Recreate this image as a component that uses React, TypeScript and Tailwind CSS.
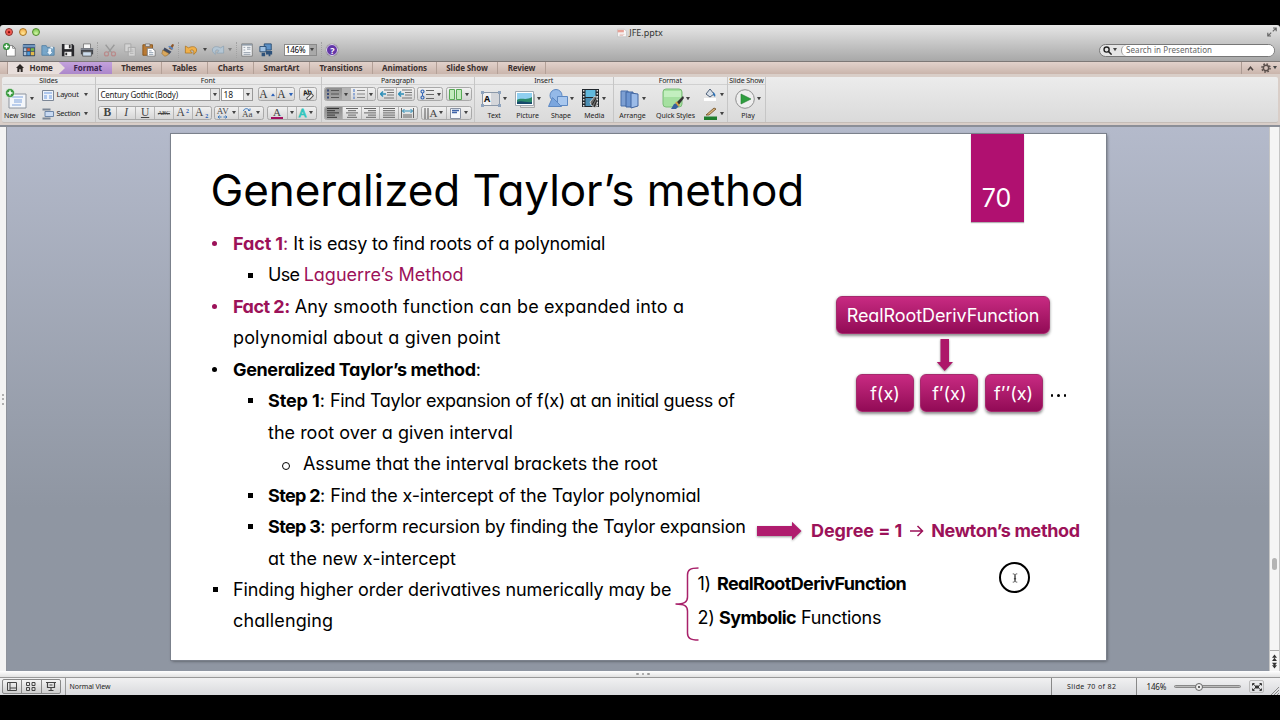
import type { ReactNode } from "react";
import clsx from "clsx";

const tabs = [
  { label: "Themes", width: "w-[50px]" },
  { label: "Tables", width: "w-[46px]" },
  { label: "Charts", width: "w-[46px]" },
  { label: "SmartArt", width: "w-[56px]" },
  { label: "Transitions", width: "w-[63px]" },
  { label: "Animations", width: "w-[64px]" },
  { label: "Slide Show", width: "w-[61px]" },
  { label: "Review", width: "w-[48px]" },
];

interface IconProps {
  size?: string;
  box?: string;
  children: ReactNode;
}

function Icon({ size = "w-[14px] h-[14px]", box = "0 0 16 16", children }: IconProps) {
  return (
    <svg viewBox={box} className={clsx("shrink-0", size)} fill="none">
      {children}
    </svg>
  );
}

function Caret({ className }: { className?: string }) {
  return (
    <svg viewBox="0 0 6 5" className={clsx("w-[4px] h-[3.4px] shrink-0", className)}>
      <path d="M0 0h6L3 5z" fill="#444" />
    </svg>
  );
}

/* ---------- Title bar and standard toolbar ---------- */

function Light({ className }: { className: string }) {
  return <span className={clsx("size-[8px] rounded-full border", className)} />;
}

function TitleRow() {
  return (
    <div className="relative flex h-[15px] items-center justify-center">
      <div className="absolute left-[5px] top-[3px] flex gap-[5.5px]">
        <Light className="border-[#8c2a24] bg-[radial-gradient(circle_at_50%_55%,#7c1010_0_18%,#ee4a42_30%,#f58a80)]" />
        <Light className="border-[#a87424] bg-[radial-gradient(circle_at_50%_80%,#ffe79a,#f2a63a)]" />
        <Light className="border-[#4f8a2c] bg-[radial-gradient(circle_at_50%_80%,#d5f7a6,#6cbf42)]" />
      </div>
      <div className="flex items-center gap-[2px] text-[9px] text-[#333]">
        <Icon size="w-[10px] h-[10px]">
          <path d="M1 2h11l3 3v9H1z" fill="#fafafa" stroke="#b9b9b9" />
          <path d="M1 3h10v4H1z" fill="#e8a196" />
          <path d="M4 10h8M4 12h6" stroke="#d9a9a1" />
        </Icon>
        JFE.pptx
      </div>
      <svg viewBox="0 0 10 10" className="absolute right-[3px] top-[2px] size-[10px]" fill="none" stroke="#666" strokeWidth="1.2">
        <path d="M6 1h3.2v3.2M9 1.2 5.8 4.4M4 9H.8V5.8M1 8.8l3.2-3.2" />
      </svg>
    </div>
  );
}

function ToolCell({ children, width = "w-[19.4px]" }: { children: ReactNode; width?: string }) {
  return <span className={clsx("flex h-full shrink-0 items-center justify-center", width)}>{children}</span>;
}

function Divider() {
  return <span className="h-[16px] w-px shrink-0 border-l border-dotted border-[#a2a2a2]" />;
}

function StandardToolbar() {
  return (
    <div className="flex h-[20px] items-center">
      <ToolCell>
        <Icon>
          <path d="M4 3h7l3 3v9H4z" fill="#fff" stroke="#777" />
          <path d="M11 3v3h3" stroke="#777" />
          <circle cx="4" cy="4" r="4" fill="#2e8f38" />
          <path d="M4 1.5v5M1.5 4h5" stroke="#fff" strokeWidth="1.6" />
        </Icon>
      </ToolCell>
      <ToolCell>
        <Icon>
          <rect x="1" y="1" width="14" height="14" rx="1" fill="#334a68" />
          <path d="M1 2h14v3H1z" fill="#6f95bd" />
          <path d="M6 6h3v3H6z" fill="#e05b32" />
          <path d="M10 6h4v3h-4z" fill="#7cb845" />
          <path d="M6 10h3v4H6z" fill="#4b9bdc" />
          <path d="M10 10h4v4h-4z" fill="#e3b94a" />
          <path d="M2 6h3v3H2zM2 10h3v4H2z" fill="#a9bed4" />
        </Icon>
      </ToolCell>
      <ToolCell>
        <Icon>
          <path d="M1 3h5l1 2h8v9H1z" fill="#77a6c9" stroke="#5381a5" />
          <path d="m8 7 4-3 2 1-2 3" fill="#eef5fa" />
          <path d="M8 6h4v4h2l-4 4-4-4h2z" fill="#e9f4fc" stroke="#5484ab" strokeWidth=".7" />
        </Icon>
      </ToolCell>
      <ToolCell>
        <Icon>
          <path d="M1 1h12l2 2v12H1z" fill="#27272b" />
          <path d="M4 1.5h8V7H4z" fill="#f4f4f4" />
          <path d="M4 10h8v5H4z" fill="#ededed" />
          <path d="M9 2h2v4H9zM5 11h2v3H5z" fill="#333" />
        </Icon>
      </ToolCell>
      <ToolCell>
        <Icon>
          <path d="M4 1h8v6H4z" fill="#f7f7f7" stroke="#777" />
          <path d="M1 6h14v7H1z" fill="#44474d" />
          <path d="M1 6h14v2H1z" fill="#7e838c" />
          <path d="M3 10h10v5H3z" fill="#ccdcec" stroke="#555" />
        </Icon>
      </ToolCell>
      <Divider />
      <span className="w-[2.500px]" />
      <ToolCell>
        <Icon>
          <path d="m3 2 7 9M13 2 6 11" stroke="#9a9a9a" strokeWidth="1.5" />
          <circle cx="4" cy="12.5" r="2.3" stroke="#b98b8b" strokeWidth="1.4" />
          <circle cx="12" cy="12.5" r="2.3" stroke="#b98b8b" strokeWidth="1.4" />
        </Icon>
      </ToolCell>
      <ToolCell>
        <Icon>
          <path d="M2 1h7v9H2zM6 5h8v10H6z" fill="#d4d4d4" stroke="#a6a6a6" />
          <path d="M8 8h4M8 10h4M8 12h4" stroke="#b4b4b4" />
        </Icon>
      </ToolCell>
      <ToolCell>
        <Icon>
          <path d="M1 2h11v12H1z" fill="#b97a34" stroke="#875217" />
          <path d="M4 1h5v3H4z" fill="#d5d5d5" stroke="#666" strokeWidth=".7" />
          <path d="M6 6h6l3 3v6H6z" fill="#fff" stroke="#777" />
          <path d="M8 9h3M8 11h5M8 13h5" stroke="#8899aa" />
        </Icon>
      </ToolCell>
      <ToolCell>
        <Icon>
          <path d="m9 6 4-5 2 1-3 6z" fill="#8e5527" />
          <path d="m4 5 8 5-3 3-7-4z" fill="#3f4b63" />
          <path d="m2 8 7 4c-1 2-3 3-5 3L1 12z" fill="#d8a75d" stroke="#8a6227" strokeWidth=".6" />
          <path d="m8 4 5 4 1-2-4-3z" fill="#5c87c2" />
        </Icon>
      </ToolCell>
      <Divider />
      <ToolCell width="w-[24.500px]">
        <Icon size="w-[15px] h-[14px]">
          <path d="M1 3.500v8h8L6.300 8.800C8.500 7 11.500 7.500 10.500 13 17 9 13.500 1 4.500 5.500z" fill="#f0b04a" stroke="#a8701c" strokeWidth=".8" />
        </Icon>
      </ToolCell>
      <Caret className="-ml-px" />
      <ToolCell width="w-[22px]">
        <Icon size="w-[15px] h-[14px]">
          <path d="M15 3.500v8H7l2.700-2.700C7.500 7 4.500 7.500 5.500 13-1 9 2.500 1 11.500 5.500z" fill="#b4c6d4" stroke="#8ba0b1" strokeWidth=".8" />
        </Icon>
      </ToolCell>
      <Caret className="-ml-px opacity-50" />
      <span className="w-[4.500px]" />
      <Divider />
      <ToolCell>
        <Icon>
          <path d="M2 1h12v14H2z" fill="#f2f4f6" stroke="#777" />
          <path d="M2 1h12v2H2z" fill="#8f9aa6" />
          <path d="M4 5h2M4 8h2M8 5h4M8 7h4M4 11h8M4 13h8" stroke="#8b96a4" />
        </Icon>
      </ToolCell>
      <ToolCell>
        <Icon>
          <path d="M6 1h8v7H6z" fill="#5c91c7" stroke="#284a70" />
          <path d="M1 4h7v6H1z" fill="#9fc1e2" stroke="#284a70" />
          <path d="M8 9h7v4H8zM3 11h4v4H3zM11 13h2v2h-2z" fill="#2d517a" />
        </Icon>
      </ToolCell>
      <span className="w-[8px]" />
      <div className="flex h-[12px] w-[33px] shrink-0 border border-[#8a8a8a] bg-white text-[8px] leading-[10px] tracking-[-0.200px] text-black">
        <span className="w-[24px] shrink-0 pl-px">146%</span>
        <span className="flex flex-1 items-center justify-center bg-[#a9a9a9]">
          <Caret />
        </span>
      </div>
      <span className="w-[4px]" />
      <Divider />
      <span className="ml-[4.500px] flex size-[12px] items-center justify-center rounded-full border border-[#e2d8f0] bg-[#6236a8] text-[9px] font-bold leading-none text-white shadow-[0_0_1px_#333]">
        ?
      </span>
      <div className="ml-auto mr-[5px] flex h-[13px] w-[176px] items-center rounded-full border border-[#777] bg-[#e6e6e6]">
        <svg viewBox="0 0 12 12" className="ml-[3px] size-[9px]" fill="none" stroke="#222" strokeWidth="1.9">
          <circle cx="4.800" cy="4.800" r="3.400" />
          <path d="m7.500 7.500 4 4" />
        </svg>
        <Caret className="ml-[1px]" />
        <div className="ml-[4px] flex h-[11px] flex-1 items-center rounded-full border-l border-[#999] bg-white pl-[4px] text-[8px] tracking-[0.080px] text-[#666]">
          Search in Presentation
        </div>
      </div>
    </div>
  );
}

/* ---------- Ribbon tabs ---------- */

function TabBar() {
  return (
    <div className="flex h-[13px] items-stretch border-t border-[#7d7876] bg-linear-to-b from-[#e2d2cb] to-[#cab5ac] text-[8px] font-bold leading-[12px] tracking-[-0.1px] text-[#3b3130]">
      <span className="w-[8px] border-r border-[#b09c94]" />
      <div className="flex w-[104px] items-stretch bg-linear-to-b from-[#c4a2dd] to-[#ac87ca]">
        <div className="flex w-[57px] items-center gap-[5.500px] bg-[#e8dedb] pl-[8px] [clip-path:polygon(0_0,89%_0,100%_50%,89%_100%,0_100%)]">
          <svg viewBox="0 0 12 12" className="size-[8px]" fill="#2c2624">
            <path d="M6 0 0 6h2v6h3V8h2v4h3V6h2z" />
          </svg>
          Home
        </div>
        <span className="-ml-[1px] flex-1 pl-[9.500px] text-[#3c2450]">Format</span>
      </div>
      {tabs.map((tab) => (
        <span key={tab.label} className={clsx("border-r border-[#b3a097] text-center", tab.width)}>
          {tab.label}
        </span>
      ))}
      <div className="ml-auto flex w-[39px] items-center border-l border-[#ab9a92] pl-[5px]">
        <svg viewBox="0 0 8 6" className="h-[5px] w-[7px]" fill="none" stroke="#4c4340" strokeWidth="1.8">
          <path d="m1 5 3-3.500L7 5" />
        </svg>
        <svg viewBox="0 0 16 16" className="ml-[7px] size-[10px]" fill="none" stroke="#5a4f4b">
          <circle cx="8" cy="8" r="4.300" strokeWidth="2.400" />
          <circle cx="8" cy="8" r="6.500" strokeWidth="2.400" strokeDasharray="2.550 2.550" />
        </svg>
        <Caret className="ml-[2px]" />
      </div>
    </div>
  );
}

/* ---------- Ribbon ---------- */

function Group({ title, width, children }: { title: string; width: string; children: ReactNode }) {
  return (
    <section className={clsx("flex shrink-0 flex-col border-r border-[#c6c6c6]", width)}>
      <h2 className="h-[8px] border-b border-[#d0d0d0] text-center text-[7px] leading-[8px] tracking-[-0.1px] text-[#222]">
        {title}
      </h2>
      {children}
    </section>
  );
}

function Buttons({ className, children }: { className: string; children: ReactNode }) {
  return (
    <div
      className={clsx(
        "flex h-[14px] shrink-0 items-stretch divide-x divide-[#b5b5b5] overflow-hidden rounded-[2.500px] border border-[#a9a9a9] bg-linear-to-b from-[#f1f1f1] to-[#d6d6d6]",
        className
      )}
    >
      {children}
    </div>
  );
}

function Btn({ className, children }: { className?: string; children: ReactNode }) {
  return <span className={clsx("flex flex-1 items-center justify-center gap-[3px] leading-none", className)}>{children}</span>;
}

function Lines({ d, color = "#666" }: { d: string; color?: string }) {
  return (
    <Icon size="w-[12px] h-[10px]" box="0 0 12 10">
      <path d={d} stroke={color} />
    </Icon>
  );
}

function SlidesGroup() {
  return (
    <Group title="Slides" width="w-[93px]">
      <div className="flex flex-1 pt-[1px]">
        <div className="w-[36px]">
          <div className="flex h-[25px] items-center pl-[2px]">
            <Icon size="w-[23px] h-[21px]" box="0 0 23 21">
              <path d="M4 6h17v14H4z" fill="#f4f7fb" stroke="#8d949e" />
              <path d="M7 9h11M9 12h8M9 14h8M7 17h9" stroke="#7fa3dc" />
              <circle cx="5" cy="5" r="4.500" fill="#3b9a3f" stroke="#fff" strokeWidth=".5" />
              <path d="M5 2.500v5M2.500 5h5" stroke="#fff" strokeWidth="1.500" />
            </Icon>
            <Caret className="ml-[2px]" />
          </div>
          <p className="whitespace-nowrap pl-[1.500px] text-[7px] leading-[10px] tracking-[-0.080px]">New Slide</p>
        </div>
        <div className="flex flex-col pl-[3px] text-[7.500px] tracking-[-0.300px]">
          <div className="flex h-[18px] items-center gap-[3px]">
            <Icon size="w-[12px] h-[11px]" box="0 0 12 11">
              <path d="M.5.5h11v10H.5z" fill="#eef3fa" stroke="#7c8796" />
              <path d="M2 3h8M2 6h3M7 6h3M2 8h3M7 8h3" stroke="#6f9be0" />
            </Icon>
            <span className="w-[24px]">Layout</span>
            <Caret />
          </div>
          <div className="flex h-[19px] items-center gap-[3px]">
            <Icon size="w-[12px] h-[12px]" box="0 0 12 12">
              <path d="M.5 1.500h8M.5 10.500h8" stroke="#7c8796" strokeWidth="2" />
              <path d="M3 3.500h8.500v5H3z" fill="#c9daf2" stroke="#6d86a8" />
            </Icon>
            <span className="w-[24px]">Section</span>
            <Caret />
          </div>
        </div>
      </div>
    </Group>
  );
}

function FontGroup() {
  return (
    <Group title="Font" width="w-[226px]">
      <div className="flex h-[19px] items-center pl-[2px]">
        <div className="flex h-[13px] w-[122px] border border-[#999] bg-white">
          <span className="flex-1 pl-[2px] text-[8px] leading-[11px] tracking-[-0.230px]">Century Gothic (Body)</span>
          <span className="flex w-[9px] items-center justify-center border-l border-[#aaa] bg-[#e6e6e6]">
            <Caret />
          </span>
        </div>
        <div className="ml-[1px] flex h-[13px] w-[32px] border border-[#999] bg-white">
          <span className="flex-1 pl-[2px] text-[8.500px] leading-[11px]">18</span>
          <span className="flex w-[9px] items-center justify-center border-l border-[#aaa] bg-[#e6e6e6]">
            <Caret />
          </span>
        </div>
        <Buttons className="ml-[5px] w-[37px] font-['Liberation_Serif',serif] text-[11.500px]">
          <Btn className="gap-0 text-[#333]">
            A<Caret className="rotate-180 [&_path]:fill-[#2c62b8]" />
          </Btn>
          <Btn className="gap-0 text-[#333]">
            A<Caret className="[&_path]:fill-[#2c62b8]" />
          </Btn>
        </Buttons>
        <Buttons className="ml-[4px] w-[18px] text-[7px]">
          <Btn>
            <span className="flex flex-col items-center">
              <span className="-rotate-12 font-bold leading-[5px] tracking-[-0.300px]">Ab</span>
              <span className="ml-[4px] h-[4px] w-[8px] -rotate-45 rounded-[1px] border border-[#555] bg-[#f4f4f4]" />
            </span>
          </Btn>
        </Buttons>
      </div>
      <div className="flex h-[19px] items-center pl-[2px] pt-[0.500px] font-['Liberation_Serif',serif] text-[11.500px] text-[#444]">
        <Buttons className="w-[114px]">
          <Btn className="font-bold">B</Btn>
          <Btn className="italic">I</Btn>
          <Btn className="underline">U</Btn>
          <Btn className="text-[6.500px] tracking-[-0.400px] line-through">ABC</Btn>
          <Btn className="gap-0">
            A<span className="-mt-[5px] -ml-[2px] text-[6px] font-bold text-[#2c62b8]">2</span>
          </Btn>
          <Btn className="gap-0">
            A<span className="mt-[5px] -ml-[1px] text-[6px] font-bold text-[#2c62b8]">2</span>
          </Btn>
        </Buttons>
        <Buttons className="ml-[2px] w-[50px]">
          <Btn>
            <span className="flex flex-col items-center text-[9px] leading-[7px]">
              AV
              <Icon size="w-[11px] h-[4px]" box="0 0 11 4">
                <path d="M1 2h3.500M6.500 2H10M2.500.5 1 2l1.500 1.500M8.500.5 10 2 8.500 3.500" stroke="#3e7abf" />
              </Icon>
            </span>
            <Caret />
          </Btn>
          <Btn>
            <span className="flex flex-col items-center text-[9px] leading-[7px]">
              <Icon size="w-[8px] h-[3px]" box="0 0 8 3">
                <path d="M.5 3C1 0 5 0 6.500 2.500M7 .5v2H5" stroke="#3e7abf" />
              </Icon>
              Aa
            </span>
            <Caret />
          </Btn>
        </Buttons>
        <Buttons className="ml-[3px] w-[50px]">
          <Btn className="min-w-[19px]">
            <span className="border-b-2 border-[#a3105f] px-[2px] text-[11px] leading-[9px]">A</span>
          </Btn>
          <Btn className="max-w-[9px]">
            <Caret />
          </Btn>
          <Btn>
            <span className="font-['Liberation_Sans'] text-[11px] text-white [-webkit-text-stroke:0.900px_#2fc4bb]">A</span>
            <Caret />
          </Btn>
        </Buttons>
      </div>
    </Group>
  );
}

const pressed = "bg-linear-to-b from-[#8e8e8e] to-[#a8a8a8]";

function ParagraphGroup() {
  return (
    <Group title="Paragraph" width="w-[153.500px]">
      <div className="flex h-[19px] items-center pl-[2px]">
        <Buttons className="w-[52px]">
          <Btn className={clsx("min-w-[18px]", pressed)}>
            <Icon size="w-[12px] h-[10px]" box="0 0 12 10">
              <path d="M4 1.500h8M4 5h8M4 8.500h8" stroke="#555" />
              <path d="M0 1.500h2M0 5h2M0 8.500h2" stroke="#3b4d7a" strokeWidth="2" />
            </Icon>
          </Btn>
          <Btn className="max-w-[8px] bg-[#b5b5b5]">
            <Caret />
          </Btn>
          <Btn className="min-w-[17px]">
            <Icon size="w-[12px] h-[10px]" box="0 0 12 10">
              <path d="M4 1.500h8M4 5h8M4 8.500h8" stroke="#888" />
              <path d="M1 0v3M1 4v2.500M1 7.500V10" stroke="#3f6fc4" />
            </Icon>
          </Btn>
          <Btn className="max-w-[8px]">
            <Caret />
          </Btn>
        </Buttons>
        <Buttons className="ml-[1.500px] w-[38px]">
          <Btn>
            <Icon size="w-[14px] h-[10px]" box="0 0 14 10">
              <path d="M4 1h10M7 3.500h7M7 6h7M4 9h10" stroke="#777" />
              <path d="M6 5H1M3 2.500.5 5 3 7.500" stroke="#2e8fb8" strokeWidth="1.500" />
            </Icon>
          </Btn>
          <Btn>
            <Icon size="w-[14px] h-[10px]" box="0 0 14 10">
              <path d="M4 1h10M7 3.500h7M7 6h7M4 9h10" stroke="#777" />
              <path d="M6 5H1M3 2.500.5 5 3 7.500" stroke="#2e8fb8" strokeWidth="1.500" />
            </Icon>
          </Btn>
        </Buttons>
        <Buttons className="ml-[2px] w-[26px]">
          <Btn>
            <Icon size="w-[14px] h-[11px]" box="0 0 14 11">
              <path d="M6 1.500h8M6 5.500h8M6 9.500h8" stroke="#666" />
              <circle cx="2.500" cy="2.500" r="1.500" stroke="#3365b5" strokeWidth="1.200" />
              <circle cx="2.500" cy="8.500" r="1.500" stroke="#3365b5" strokeWidth="1.200" />
              <path d="M2.500 4v3" stroke="#3365b5" />
            </Icon>
            <Caret />
          </Btn>
        </Buttons>
        <Buttons className="ml-[3px] w-[26px]">
          <Btn>
            <Icon size="w-[13px] h-[11px]" box="0 0 13 11">
              <path d="M.5.5h5v10h-5zM7.500.5h5v10h-5z" fill="#c2ecbd" stroke="#58a856" />
            </Icon>
            <Caret />
          </Btn>
        </Buttons>
      </div>
      <div className="flex h-[19px] items-center pl-[2px] pt-[0.500px]">
        <Buttons className="w-[94px]">
          <Btn className={pressed}>
            <Lines d="M0 .5h12M0 2.700h8M0 4.900h12M0 7.100h8M0 9.300h10" color="#333" />
          </Btn>
          <Btn>
            <Lines d="M0 .5h12M2 2.700h8M0 4.900h12M2 7.100h8M1 9.300h10" />
          </Btn>
          <Btn>
            <Lines d="M0 .5h12M4 2.700h8M0 4.900h12M4 7.100h8M2 9.300h10" />
          </Btn>
          <Btn>
            <Lines d="M0 .5h12M0 2.700h12M0 4.900h12M0 7.100h12M0 9.300h12" />
          </Btn>
          <Btn>
            <Icon size="w-[13px] h-[10px]" box="0 0 13 10">
              <path d="M.5 0v10M12.500 0v10M2 7h9M2 9h9" stroke="#666" />
              <path d="M1.500 3h10M3.500 1l-2 2 2 2M9.500 1l2 2-2 2" stroke="#2e8fb8" />
            </Icon>
          </Btn>
        </Buttons>
        <Buttons className="ml-[3px] w-[51px]">
          <Btn>
            <Icon size="w-[6px] h-[11px]" box="0 0 6 11">
              <path d="M1 0v11M4 0v11" stroke="#555" />
            </Icon>
            <span className="-ml-[3px] font-['Liberation_Serif',serif] text-[11px] text-[#444]">A</span>
            <Caret className="-ml-[1px]" />
          </Btn>
          <Btn>
            <Icon size="w-[11px] h-[11px]" box="0 0 11 11">
              <path d="M.5.5h10v10H.5z" fill="#f6f8fb" stroke="#8a93a3" />
              <path d="M2 2.500h7M2 4.500h5" stroke="#3f63a8" strokeWidth="1.300" />
            </Icon>
            <Caret />
          </Btn>
        </Buttons>
      </div>
    </Group>
  );
}

function BigButton({ label, width, children }: { label: string; width: string; children: ReactNode }) {
  return (
    <div className={clsx("flex flex-col items-center", width)}>
      <div className="flex h-[27px] items-center gap-[2px]">
        {children}
        <Caret />
      </div>
      <span className="whitespace-nowrap text-[7px] leading-[8px] tracking-[-0.050px]">{label}</span>
    </div>
  );
}

function InsertGroup() {
  return (
    <Group title="Insert" width="w-[138.500px]">
      <div className="flex pl-[2.500px]">
        <BigButton label="Text" width="w-[33.400px]">
          <Icon size="w-[20px] h-[18px]" box="0 0 20 18">
            <path d="M1.500 2.500h17v13h-17z" fill="#f1f1f1" stroke="#8b98a8" />
            <path d="M10 3h8v12h-8z" fill="#d4d6da" />
            <path d="M0 1h3v3H0zM17 1h3v3h-3zM0 14h3v3H0zM17 14h3v3h-3z" fill="#8ea3bd" />
            <text x="3" y="12" fontSize="9" fontWeight="700" fill="#111">A</text>
          </Icon>
        </BigButton>
        <BigButton label="Picture" width="w-[33.400px]">
          <Icon size="w-[20px] h-[18px]" box="0 0 20 18">
            <path d="M5.500 4.500h14v13h-14z" fill="#e5e5e5" stroke="#aaa" />
            <path d="M.5 1.500h18v14H.5z" fill="#fff" stroke="#a0a8b0" />
            <path d="M2 3h15v11H2z" fill="#8fcff0" />
            <path d="M2 10c4-3 9 1 15-3v7H2z" fill="#2c8a6b" />
            <path d="M2 12c5-2 9 1 15 0v2H2z" fill="#17496c" />
          </Icon>
        </BigButton>
        <BigButton label="Shape" width="w-[33.400px]">
          <Icon size="w-[20px] h-[20px]" box="0 0 20 20">
            <circle cx="8" cy="6.500" r="6" fill="#94b9e8" stroke="#5d88c2" />
            <path d="M9.500 7.500h10v9h-10z" fill="#a8c7ee" stroke="#5d88c2" />
            <path d="m.5 17.500 4-9 9 9z" fill="#7ba6de" stroke="#5d88c2" />
          </Icon>
        </BigButton>
        <BigButton label="Media" width="w-[33.400px]">
          <Icon size="w-[18px] h-[21px]" box="0 0 18 21">
            <path d="M0 1h17v18H0z" fill="#20262c" />
            <path d="M3.500 2h10v7h-10z" fill="#62b9dd" />
            <path d="M3.500 10h10v8h-10z" fill="#4b8fb4" />
            <path d="M1.700 2v17M15.300 2v17" stroke="#ddd" strokeWidth="1.500" strokeDasharray="1.500 1.500" />
            <path d="m8 14 5-6 2 1v8l-2 3-4-3z" fill="#6b6b6b" stroke="#ddd" strokeWidth=".8" />
            <path d="m10 17 4-7M12 19l3-7" stroke="#222" />
          </Icon>
        </BigButton>
      </div>
    </Group>
  );
}

function FormatGroup() {
  return (
    <Group title="Format" width="w-[114.500px]">
      <div className="flex">
        <BigButton label="Arrange" width="w-[38px]">
          <Icon size="w-[20px] h-[20px]" box="0 0 20 20">
            <path d="M1 2h7v15H1z" fill="#7d9fd2" stroke="#4a70aa" />
            <path d="M6 3h7v15H6z" fill="#6d95d0" stroke="#41659f" />
            <path d="m11 4 7 1v12l-7 2z" fill="#9bbbe8" stroke="#41659f" />
          </Icon>
        </BigButton>
        <BigButton label="Quick Styles" width="w-[48px]">
          <Icon size="w-[22px] h-[22px]" box="0 0 22 22">
            <rect x="1" y="1" width="19" height="18" rx="3" fill="#a5e0a0" stroke="#7bbd78" />
            <path d="M2 3h17v6H2z" fill="#c3efbf" />
            <path d="m14 15 7-7 1 2-6 8z" fill="#343434" />
            <path d="m9 21 3-5 3-1 2 3-3 3z" fill="#38609f" />
            <path d="m14 14 3 4" stroke="#d9a046" strokeWidth="2" />
          </Icon>
        </BigButton>
        <div className="flex flex-col pl-[4px]">
          <div className="flex h-[19px] items-center gap-[4px]">
            <Icon size="w-[12px] h-[13px]" box="0 0 12 13">
              <path d="m2 6 4-5 4 5-4 3z" fill="#d7dfe8" stroke="#4c5f78" />
              <path d="M9 4c2 1 3 3 2 5l-2-2z" fill="#3374b5" />
              <path d="M0 10h12v3H0z" fill="#fff" />
            </Icon>
            <Caret />
          </div>
          <div className="flex h-[19px] items-center gap-[3px]">
            <Icon size="w-[13px] h-[13px]" box="0 0 13 13">
              <path d="m2 8 8-7 2 1-7 6z" fill="#d7b27a" stroke="#6c4b22" strokeWidth=".8" />
              <path d="M0 9.500h13v3.500H0z" fill="#1e7d2e" />
            </Icon>
            <Caret />
          </div>
        </div>
      </div>
    </Group>
  );
}

function Ribbon() {
  return (
    <div className="flex h-[51px] flex-col bg-[#d9cec8] px-[2px] pb-[2px] pt-[3px]">
      <div className="flex h-[46px] rounded-[2px] border-b border-[#c5bdb8] bg-linear-to-b from-[#ececec] to-[#dadada] pl-[0.500px] text-[#1c1c1c]">
        <SlidesGroup />
        <FontGroup />
        <ParagraphGroup />
        <InsertGroup />
        <FormatGroup />
        <Group title="Slide Show" width="w-[38px]">
          <BigButton label="Play" width="w-[40px]">
            <Icon size="w-[20px] h-[20px]" box="0 0 20 20">
              <circle cx="10" cy="10" r="9.300" fill="#eee" stroke="#8f8f8f" />
              <path d="m6 5 10 5-10 5z" fill="#2f9e3f" stroke="#237c30" strokeWidth=".6" />
            </Icon>
          </BigButton>
        </Group>
      </div>
    </div>
  );
}

/* ---------- Slide ---------- */

interface BulletProps {
  mark: "dot" | "square" | "ring";
  level?: 0 | 1 | 2;
  pink?: boolean;
  children: ReactNode;
}

function Bullet({ mark, level = 0, pink, children }: BulletProps) {
  return (
    <li className={clsx("flex", level === 1 && "pl-[35px]", level === 2 && "pl-[70px]")}>
      <span className="flex h-[31.450px] w-[21px] shrink-0 items-center">
        <span
          className={clsx(
            mark === "dot" && "size-[5px] rounded-full",
            mark === "square" && "ml-px size-[5px]",
            mark === "ring" && "mt-[5px] size-[8px] rounded-full border border-black",
            mark !== "ring" && (pink ? "bg-[#9c1259]" : "bg-black")
          )}
        />
      </span>
      <div className="whitespace-nowrap">{children}</div>
    </li>
  );
}

function Box({ className, children }: { className: string; children: ReactNode }) {
  return (
    <div
      className={clsx(
        "flex h-[38px] items-center justify-center rounded-[6px] border border-[#a52a6d] bg-linear-to-b from-[#c82a82] to-[#920a56] pt-[2px] text-white shadow-[0_1.500px_3px_rgba(0,0,0,0.45)]",
        className
      )}
    >
      {children}
    </div>
  );
}

function Slide() {
  return (
    <article className="relative h-[526px] w-[935px] bg-white text-[18px] font-normal leading-[31.450px] text-black shadow-[0_0_0_1px_#7b818c,1px_1px_3px_rgba(0,0,0,0.5)] [font-family:Inter,sans-serif] [font-feature-settings:'cv11']">
      <h1 className="pl-[39.500px] pt-[28px] text-[44px] font-normal leading-[56px] tracking-[-0.070px]">Generalized Taylor’s method</h1>
      <ul className="pl-[41px] pt-[10px]">
        <Bullet mark="dot" pink>
          <span className="text-[#9c1259]">
            <b className="font-bold tracking-[-0.100px]">Fact 1</b>:
          </span>{" "}
          <span className="tracking-[-0.220px]">It is easy to find roots of a polynomial</span>
        </Bullet>
        <Bullet mark="square" level={1}>
          <span className="tracking-[-0.700px]">Use </span>
          <span className="tracking-[0px] text-[#9c1259]">Laguerre’s Method</span>
        </Bullet>
        <Bullet mark="dot" pink>
          <b className="font-bold tracking-[-0.500px] text-[#9c1259]">Fact 2:</b>{" "}
          <span className="tracking-[0.160px]">Any smooth function can be expanded into a</span>
          <br />
          <span className="tracking-[0.150px]">polynomial about a given point</span>
        </Bullet>
        <Bullet mark="dot">
          <b className="font-bold tracking-[-0.380px]">Generalized Taylor’s method</b>:
        </Bullet>
        <Bullet mark="square" level={1}>
          <b className="font-bold tracking-[-0.100px]">Step 1</b>:{" "}
          <span className="tracking-[-0.350px]">Find Taylor expansion of f(x) at an initial guess of</span>
          <br />
          <span className="tracking-[0.010px]">the root over a given interval</span>
        </Bullet>
        <Bullet mark="ring" level={2}>
          <span className="tracking-[-0.070px]">Assume that the interval brackets the root</span>
        </Bullet>
        <Bullet mark="square" level={1}>
          <b className="font-bold tracking-[-0.650px]">Step 2</b>:{" "}
          <span className="tracking-[-0.180px]">Find the x-intercept of the Taylor polynomial</span>
        </Bullet>
        <Bullet mark="square" level={1}>
          <b className="font-bold tracking-[-0.650px]">Step 3</b>:{" "}
          <span className="tracking-[-0.230px]">perform recursion by finding the Taylor expansion</span>
          <br />
          <span className="tracking-[0.010px]">at the new x-intercept</span>
        </Bullet>
        <Bullet mark="square">
          <span className="tracking-[-0.110px]">Finding higher order derivatives numerically may be</span>
          <br />
          <span className="tracking-[0.120px]">challenging</span>
        </Bullet>
      </ul>

      {/* Slide number ribbon */}
      <div className="absolute left-[799.500px] top-0 flex h-[88px] w-[53px] items-end justify-center bg-[#b01070] pr-px pb-[8px] text-[25px] leading-[32px] text-white shadow-[0_1px_1px_rgba(0,0,0,0.3)]">
        70
      </div>

      {/* Function hierarchy */}
      <div className="absolute left-[665px] top-[162px] w-[240px]">
        <Box className="w-[214px]">
          <span className="tracking-[-0.080px]">RealRootDerivFunction</span>
        </Box>
        <svg viewBox="0 0 18 33" className="ml-[99.500px] mt-[5px] block h-[33px] w-[18px] drop-shadow-[0_1px_1px_rgba(0,0,0,0.4)]">
          <path d="M4.500 0h8.500v23h4L8.700 32 .8 23h3.700z" fill="#ad1769" />
        </svg>
        <div className="ml-[20px] mt-[2px] flex items-center gap-[6.300px]">
          <Box className="w-[58px] shrink-0">f(x)</Box>
          <Box className="w-[58px] shrink-0">f’(x)</Box>
          <Box className="w-[58px] shrink-0">f’’(x)</Box>
          <span className="flex gap-[4px] pl-[2px] pt-[5px]">
            <i className="size-[2.500px] rounded-full bg-black" />
            <i className="size-[2.500px] rounded-full bg-black" />
            <i className="size-[2.500px] rounded-full bg-black" />
          </span>
        </div>
      </div>

      {/* Newton callout */}
      <div className="absolute left-[586px] top-[381px] flex items-center whitespace-nowrap font-bold text-[#9c1259]">
        <svg viewBox="0 0 46 20" className="mr-[8px] h-[20px] w-[46px] drop-shadow-[0_1px_1px_rgba(0,0,0,0.4)]">
          <path d="M0 5h35V.8L44.500 10 35 19v-4H0z" fill="#b01c6e" />
        </svg>
        <span className="tracking-[-0.080px]">Degree = 1</span>
        <svg viewBox="0 0 14 14" className="mr-[7px] ml-[8px] h-[14px] w-[14px]" fill="none" stroke="#9c1259" strokeWidth="1.500">
          <path d="M0 7h12.500M7.500 2 12.500 7 7.500 12" />
        </svg>
        <span className="tracking-[-0.340px]">Newton’s method</span>
      </div>

      {/* Options in braces */}
      <div className="absolute left-[503.500px] top-[433px] flex gap-[2px]">
        <svg viewBox="0 0 24 74" className="h-[74px] w-[24px]" fill="none" stroke="#a8216a" strokeWidth="1.500">
          <path d="M23.500 1C15 1 12.500 3 12.500 8v22c0 5-3 7-12 7 9 0 12 2 12 7v22c0 5 2.500 7 11 7" />
        </svg>
        <ol className="-ml-[3px] whitespace-nowrap leading-[33.500px]">
          <li>
            <span className="inline-block w-[19.500px] tracking-[-0.200px]">1)</span>
            <b className="font-bold tracking-[-0.640px]">RealRootDerivFunction</b>
          </li>
          <li>
            <span className="inline-block w-[21.500px] tracking-[-0.300px]">2)</span>
            <b className="font-bold tracking-[-0.600px]">Symbolic</b>{" "}
            <span className="tracking-[-0.300px]">Functions</span>
          </li>
        </ol>
      </div>

      {/* Mouse pointer highlight */}
      <div className="absolute left-[827.500px] top-[428px] flex size-[31px] items-center justify-center rounded-full border-2 border-black">
        <svg viewBox="0 0 8 12" className="ml-[2px] h-[12px] w-[6px]" fill="none" stroke="#222">
          <path d="M1 .5c2 0 3 .5 3 2v7c0 1.500-1 2-3 2M7 .5c-2 0-3 .5-3 2v7c0 1.500 1 2 3 2M2.500 7h3" />
        </svg>
      </div>
    </article>
  );
}

/* ---------- Workspace and status bar ---------- */

function Workspace() {
  return (
    <div className="flex h-[546px] border-t-2 border-[#8b8f98]">
      <div className="flex w-[7px] flex-col items-center justify-center gap-[2.500px] border-r border-[#8e929b] bg-[#f3f3f3]">
        <i className="size-[2px] rounded-full bg-[#999]" />
        <i className="size-[2px] rounded-full bg-[#999]" />
        <i className="size-[2px] rounded-full bg-[#999]" />
      </div>
      <div className="flex-1 bg-linear-to-b from-[#b4bacb] to-[#8f96a2] to-70% pl-[164px] pt-[7px]">
        <Slide />
      </div>
      <div className="flex w-[11px] flex-col items-center border-x border-[#c5c5c5] bg-[#f5f5f5]">
        <span className="mt-[431px] h-[12px] w-[5px] rounded-full bg-[#b4b4b4]" />
        <div className="mt-auto flex h-[21px] w-full items-center justify-center border-t border-[#aaa]">
          <svg viewBox="0 0 6 17" className="h-[17px] w-[5px]" fill="#333">
            <path d="m3 0 3 4H0zM3 4l3 4H0zM0 10h6l-3 4zM0 13h6l-3 4z" />
          </svg>
        </div>
      </div>
    </div>
  );
}

function StatusBar() {
  return (
    <div className="flex h-[17px] items-center bg-linear-to-b from-[#f1f1f2] to-[#d9dadd] text-[7px] text-[#222]">
      <div className="ml-[2px] flex h-[15px] w-[59px] items-center divide-x divide-[#888] rounded-[2px] border border-[#888] bg-linear-to-b from-[#f4f4f4] to-[#cfcfcf]">
        <Btn className="h-full">
          <Icon size="w-[10px] h-[9px]" box="0 0 10 9">
            <path d="M.5.5h9v8h-9zM3 .5v8M3 6h6.500" stroke="#444" />
          </Icon>
        </Btn>
        <Btn className="h-full">
          <Icon size="w-[10px] h-[9px]" box="0 0 10 9">
            <path d="M.5.5h3v3h-3zM6 .5h3v3H6zM.5 5.500h3v3h-3zM6 5.500h3v3H6z" stroke="#444" />
          </Icon>
        </Btn>
        <Btn className="h-full">
          <Icon size="w-[10px] h-[9px]" box="0 0 10 9">
            <path d="M0 .5h10M1.500.5v5h7v-5M5 5.500v3M2.500 8.500h5M3.500 3h3" stroke="#444" strokeWidth="1.200" />
          </Icon>
        </Btn>
      </div>
      <span className="ml-[4px] h-full border-l border-[#999] pl-[3.500px] leading-[17px] tracking-[-0.080px]">Normal View</span>
      <div className="ml-auto flex h-full items-center">
        <span className="h-full w-[85px] border-l border-[#888] pl-[15px] leading-[17px] tracking-[0.400px]">Slide 70 of 82</span>
        <span className="h-full w-[38px] border-l border-[#888] pl-[9.500px] text-[8px] leading-[17px] tracking-[-0.200px]">146%</span>
        <div className="relative h-[3px] w-[67px] rounded-full border border-[#888] bg-[#bbb]">
          <span className="absolute -top-[3.500px] left-[20px] flex size-[8px] items-center justify-center rounded-full border border-[#666] bg-[#eee]">
            <i className="size-[2px] rounded-full bg-[#333]" />
          </span>
        </div>
        <span className="ml-[8px] flex h-[13px] w-[15px] items-center justify-center rounded-[2px] border border-[#bbb]">
          <svg viewBox="0 0 10 8" className="h-[8px] w-[10px]" fill="none" stroke="#333">
            <path d="m1 1 2.500 2M9 1 6.500 3M1 7l2.500-2M9 7 6.500 5M.5 2.500v-2h2M7.500.5h2v2M9.500 5.500v2h-2M2.500 7.500h-2v-2" />
            <path d="M3.500 3h3v2h-3z" fill="#333" />
          </svg>
        </span>
        <svg viewBox="0 0 8 8" className="ml-[7px] mr-px size-[8px] self-end" stroke="#888" fill="none">
          <path d="m0 8 8-8M3 8l5-5M6 8l2-2" />
        </svg>
      </div>
    </div>
  );
}

export default function App() {
  return (
    <div className="h-[720px] w-[1280px] overflow-hidden bg-black pt-[25px] [font-family:'Noto_Sans',sans-serif]">
      <div className="h-[36px] rounded-t-[3px] bg-linear-to-b from-[#e6e6e6] to-[#a8a8a8]">
        <TitleRow />
        <StandardToolbar />
      </div>
      <TabBar />
      <Ribbon />
      <Workspace />
      <div className="flex h-[7px] items-center justify-center gap-[3px] border-b border-[#999] bg-linear-to-b from-[#fff] to-[#e2e2e2] pl-[6px]">
        <i className="size-[2.500px] rounded-full bg-[#999]" />
        <i className="size-[2.500px] rounded-full bg-[#999]" />
        <i className="size-[2.500px] rounded-full bg-[#999]" />
      </div>
      <StatusBar />
    </div>
  );
}
